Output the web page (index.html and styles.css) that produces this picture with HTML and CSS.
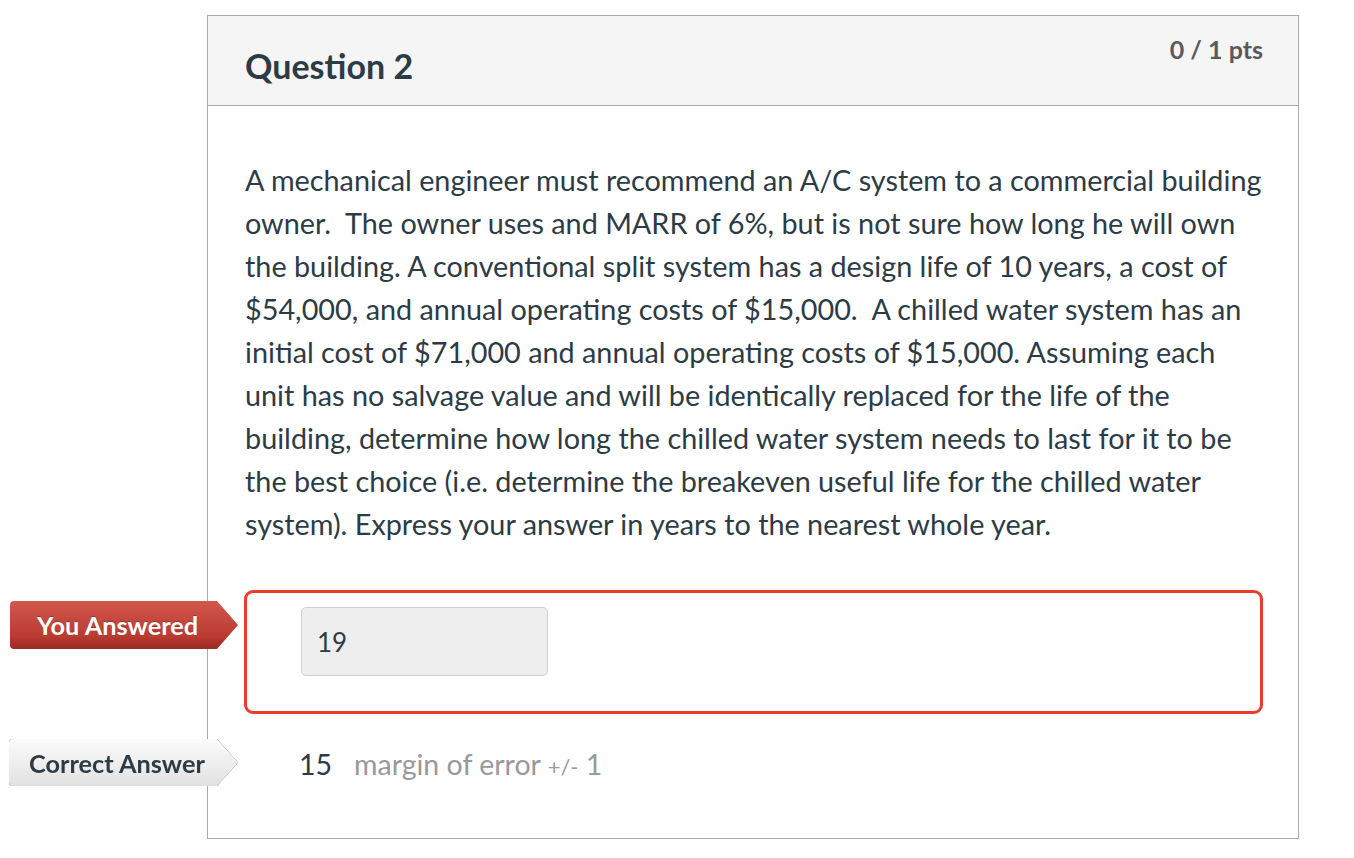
FILE: index.html
```html
<!DOCTYPE html>
<html>
<head>
<meta charset="utf-8">
<link rel="stylesheet" href="styles.css">
</head>
<body>
<div class="page">
  <div class="card">
    <div class="header">
      <h2 class="title">Question 2</h2>
      <div class="pts">0 / 1 pts</div>
    </div>
    <div class="body">
      <p class="question">A mechanical engineer must recommend an A/C system to a commercial building owner.&nbsp; The owner uses and MARR of 6%, but is not sure how long he will own the building. A conventional split system has a design life of 10 years, a cost of $54,000, and annual operating costs of $15,000.&nbsp; A chilled water system has an initial cost of $71,000 and annual operating costs of $15,000. Assuming each unit has no salvage value and will be identically replaced for the life of the building, determine how long the chilled water system needs to last for it to be the best choice (i.e. determine the breakeven useful life for the chilled water system). Express your answer in years to the nearest whole year.</p>

      <div class="answer-row">
        <div class="label label-wrong"><span>You Answered</span></div>
        <div class="answer-box">
          <div class="input">19</div>
        </div>
      </div>

      <div class="answer-row correct-row">
        <div class="label-shadow"><div class="label label-correct"><span>Correct Answer</span></div></div>
        <div class="correct-text"><span class="num">15</span><span class="margin">margin of error <small>+/-</small> 1</span></div>
      </div>
    </div>
  </div>
</div>
</body>
</html>
```

FILE: styles.css
```css
html, body {
  margin: 0;
  padding: 0;
  background: #fff;
  font-family: Lato, "Open Sans", sans-serif;
  color: #2d3b45;
}

.page {
  padding: 15px 0 0 207px;
}

.card {
  width: 1092px;
  height: 824px;
  box-sizing: border-box;
  border: 1px solid #aaaaaa;
}

.header {
  height: 89px;
  background: #f5f5f5;
  border-bottom: 1px solid #aaaaaa;
  display: flex;
  justify-content: space-between;
  align-items: flex-start;
  padding: 0 35px 0 37px;
}

.title {
  margin: 29px 0 0 0;
  font-size: 34px;
  font-weight: 700;
  line-height: 42px;
  color: #2d3b45;
}

.pts {
  margin-top: 17px;
  font-size: 25px;
  font-weight: 700;
  line-height: 32px;
  color: #5a5a5a;
}

.body {
  padding: 53px 33px 0 37px;
}

.question {
  margin: 0;
  font-size: 28.8px;
  line-height: 43px;
  color: #2d3b45;
}

.answer-row {
  position: relative;
  margin-top: 44px;
}

.label {
  height: 48px;
  width: 228px;
  box-sizing: border-box;
  border-radius: 4px;
  clip-path: polygon(0 0, calc(100% - 21px) 0, 100% 50%, calc(100% - 21px) 100%, 0 100%);
  display: flex;
  align-items: center;
  padding-left: 27px;
  font-size: 25.3px;
  font-weight: 700;
}

.label-wrong {
  position: absolute;
  left: -235px;
  top: 11px;
  background: linear-gradient(#d4574d, #b83a31 75%, #9a2923);
  color: #fff;
  text-shadow: 0 -1px 0 rgba(0, 0, 0, 0.25);
}

.answer-box {
  margin-left: -1px;
  width: 1019px;
  height: 124px;
  box-sizing: border-box;
  border: 3px solid #ee3a2c;
  border-radius: 9px;
  padding: 14px 0 0 54px;
}

.input {
  width: 247px;
  height: 69px;
  box-sizing: border-box;
  background: #eeeeee;
  border: 1px solid #cfcfcf;
  border-radius: 5px;
  padding-left: 15px;
  display: flex;
  align-items: center;
  font-size: 26px;
  color: #2d3b45;
}

.correct-row {
  margin-top: 25px;
  height: 47px;
  display: flex;
  align-items: center;
}

.label-shadow {
  position: absolute;
  left: -236px;
  top: 0;
  filter: drop-shadow(0 0 0.7px #8f8f8f) drop-shadow(0 0 0.5px #9a9a9a);
}

.label-correct {
  height: 47px;
  width: 229px;
  padding-left: 20px;
  background: linear-gradient(#fbfbfb, #ececec 60%, #e0e0e0);
  color: #2d3b45;
}

.correct-text {
  padding-left: 54px;
  font-size: 28.5px;
  line-height: 47px;
  margin-top: 6px;
}

.num {
  color: #2d3b45;
  margin-right: 22px;
}

.margin {
  color: #999999;
}

.margin small {
  font-size: 22px;
}
```
